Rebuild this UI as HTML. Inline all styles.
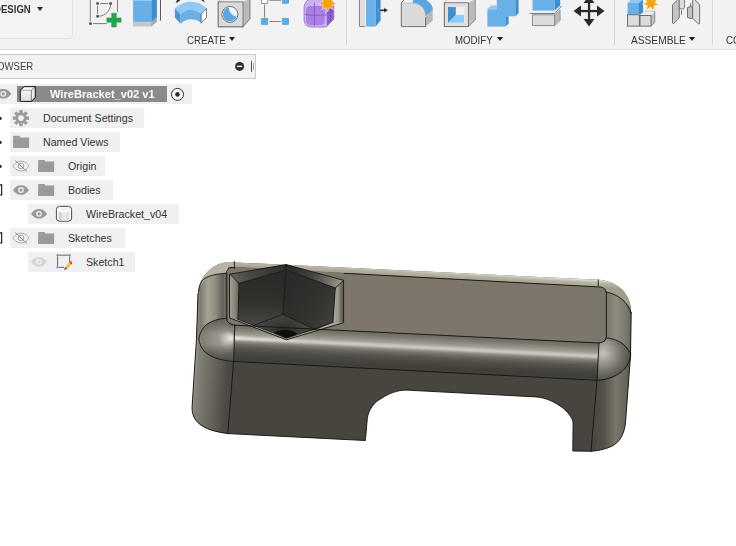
<!DOCTYPE html>
<html><head><meta charset="utf-8">
<style>
html,body{margin:0;padding:0;}
body{width:736px;height:546px;overflow:hidden;background:#fff;position:relative;font-family:"Liberation Sans",sans-serif;font-size:12px;color:#333;}
.abs{position:absolute;}
#tb{left:0;top:0;width:736px;height:50px;background:#f2f2f2;border-bottom:1px solid #dedede;box-sizing:border-box;}
#design{left:-10px;top:-10px;width:83px;height:49px;border:1px solid #e0e0e0;border-radius:4px;background:#f3f3f3;box-sizing:border-box;}
.lbl{top:34px;font-size:10.67px;color:#333;white-space:nowrap;line-height:13px;transform:scaleX(.91);transform-origin:0 0;}
.tr{width:0;height:0;border-left:3px solid transparent;border-right:3px solid transparent;border-top:4px solid #222;}
.sep{top:0;width:1px;height:45px;background:#d6d6d6;}
.tri{display:inline-block;width:0;height:0;border-left:3px solid transparent;border-right:3px solid transparent;border-top:4px solid #222;vertical-align:middle;margin-left:3px;margin-top:-2px;}
#bh{left:-1px;top:54px;width:257px;height:25px;background:#f2f2f2;border:1px solid #c9c9c9;box-sizing:border-box;}
.row{height:20px;background:#f0f0f0;}
.rt{font-size:10.67px;line-height:14px;white-space:nowrap;color:#333;}
</style></head><body>
<div id="tb" class="abs"></div>
<div id="design" class="abs"></div>
<div class="abs lbl" style="left:-6px;top:3px;font-weight:bold;transform:scaleX(.9)">DESIGN</div><div class="abs tr" style="left:37px;top:7px"></div>
<div class="abs sep" style="left:346px"></div>
<div class="abs sep" style="left:614px"></div>
<div class="abs sep" style="left:712px"></div>
<div class="abs lbl" style="left:187px">CREATE</div><div class="abs tr" style="left:229px;top:37px"></div>
<div class="abs lbl" style="left:455px">MODIFY</div><div class="abs tr" style="left:497px;top:37px"></div>
<div class="abs lbl" style="left:631px;transform:scaleX(.955)">ASSEMBLE</div><div class="abs tr" style="left:689px;top:37px"></div>
<div class="abs lbl" style="left:726px">CO</div>

<svg class="abs" id="icons" style="left:0;top:0" width="736" height="49" viewBox="0 0 736 49">
<!-- 1 create sketch -->
<g stroke="#4a4a4a" stroke-width="0.7" fill="none">
<path d="M90.3,0 V21.3 M93,23.6 H107 M117.5,0 V12"/>
<path d="M100,3.5 H108.3 M97.6,5.8 V14" />
<path d="M110.6,5 C110,11 105,15.6 99.3,16.2"/>
</g>
<g fill="#4a4a4a"><rect x="89.2" y="22.4" width="2.6" height="2.4"/><rect x="96.3" y="2.3" width="2.6" height="2.4"/><rect x="109.3" y="2.3" width="2.6" height="2.4"/><rect x="96.3" y="15.1" width="2.6" height="2.4"/></g>
<path d="M111.7,13.2 h4.6 v4.7 h4.8 v4.3 h-4.8 v4.8 h-4.6 v-4.8 h-4.8 v-4.3 h4.8 z" fill="#22a74c" stroke="#1b9440" stroke-width="0.5"/>
<!-- 2 extrude -->
<path d="M133.1,21.9 H151.3 L156.9,16.9 V21.5 L151.3,26.5 H133.1 Z" fill="#c6c6c6"/>
<path d="M151.3,21.9 L156.9,16.9 V21.5 L151.3,26.5 Z" fill="#a8a8a8"/>
<rect x="133.1" y="0" width="18.2" height="21.9" fill="#68afe6"/>
<path d="M151.3,0 H156.9 V16.9 L151.3,21.9 Z" fill="#3f8dce"/>
<path d="M133.1,0 H151.3 L152.3,0 L151.3,0.9 H133.1 Z" fill="#8fcaf8"/>
<rect x="160" y="0" width="0.8" height="20.6" fill="#333"/>
<!-- 3 revolve -->
<path d="M174.9,8.5 C181,3.5 186,1.8 191,1.8 C197,1.8 202,4 206.2,8 L201.2,14 C198,11 194.5,9.8 191,9.8 C187,9.8 183.5,11.5 180.6,14.5 Z" fill="#8fcaf8"/>
<path d="M174.9,8.5 L180.6,14.5 L180.6,23.8 L174.9,17.5 Z" fill="#4a93d4"/>
<path d="M180.6,14.5 C183.5,11.5 187,9.8 191,9.8 C194.5,9.8 198,11 201.2,14 L201.2,23 C198,20.3 194.5,19.3 191,19.3 C187,19.3 183.5,20.8 180.6,23.8 Z" fill="#69b0e6"/>
<path d="M201.2,14 L206.5,8.5 V17.5 L201.2,23.2 Z" fill="#fff" stroke="#444" stroke-width="0.7"/>
<path d="M175.6,2.9 L178,-1.5 L180.2,0.2 L177.6,2.2 Z M204.8,2.5 L200.4,-0.6 L202,-2 L203.6,0 Z" fill="#222"/>
<!-- 4 hole -->
<path d="M218.2,1.9 L222,-1 H250 V18.7 L243,26.8 H218.2 Z" fill="#b9b9b9" stroke="#5a5a5a" stroke-width="0.7"/>
<path d="M218.2,1.9 L222,-1 H250 L243,1.9 Z" fill="#ececec"/>
<rect x="218.2" y="1.9" width="24.8" height="24.9" fill="#dadada" stroke="#5a5a5a" stroke-width="0.7"/>
<circle cx="229.9" cy="14.4" r="8" fill="#f4f4f4" stroke="#555" stroke-width="0.8"/>
<path d="M228.8,7.6 C229,12.5 232,16 236.8,16.6 C235.8,19.8 233,21.3 229.9,21.3 C226,21.3 223,18.3 223,14.4 C223,10.8 225.5,8 228.8,7.6 Z" fill="#5aa6e2"/>
<!-- 5 dashed box -->
<g stroke="#555" stroke-width="0.7" fill="none"><path d="M264.5,4.5 V17.5 M269.4,21.5 H281 M269.4,0.3 H281"/></g>
<rect x="261.4" y="-3" width="6.4" height="6.4" fill="#fff" stroke="#555" stroke-width="0.6"/>
<rect x="282.3" y="-3" width="6.4" height="6.4" fill="#5aaee8" stroke="#3d92d4" stroke-width="0.5"/>
<rect x="261.4" y="18.2" width="6.4" height="6.4" fill="#5aaee8" stroke="#3d92d4" stroke-width="0.5"/>
<rect x="282.3" y="18.2" width="6.4" height="6.4" fill="#5aaee8" stroke="#3d92d4" stroke-width="0.5"/>
<!-- 6 purple form -->
<path d="M304.1,8 Q304.1,1 311,-1.5 H328 Q334,-0.5 333.8,6 V19 L327,26.3 Q326,27 324,27 H311 Q304.1,26 304.1,20 Z" fill="#cbb2f5" stroke="#8e6cc8" stroke-width="0.8"/>
<path d="M326.6,10 L333.5,6 V19 L327,26 Q326.6,20 326.6,10 Z" fill="#8a60cf"/>
<rect x="306" y="6" width="18.8" height="18.9" rx="4.2" fill="#aa7fe6"/>
<path d="M314.4,2.5 V26 M304.8,14.6 Q315,16 326.5,15" stroke="#7d55b8" stroke-width="0.8" fill="none"/>
<path d="M330.4,9 V22 M327,13.6 L333.6,11.4" stroke="#7650b0" stroke-width="0.7" fill="none"/>
<path d="M327.6,-6 L329.3,-0.4 L334,-3 L331.6,1.7 L336.2,3.6 L331.5,5.3 L333.6,9.6 L329.2,7.5 L327.6,12 L326,7.5 L321.6,9.6 L323.7,5.3 L319,3.6 L323.6,1.7 L321.2,-3 L325.9,-0.4 Z" fill="#f7a100" stroke="#f3ecdf" stroke-width="0.5"/>
<!-- 7 press pull -->
<path d="M359.6,0 V26.4 H365" fill="none" stroke="#555" stroke-width="0.8"/>
<rect x="360" y="0" width="5" height="26" fill="#dedede"/>
<rect x="366" y="0" width="9.6" height="26.6" fill="#6ab2e8"/>
<path d="M375.6,0 H380.6 V20.6 L375.6,26.6 Z" fill="#3f8fd0"/>
<path d="M378.5,9.2 H384 V7.6 L388.3,10.2 L384,12.8 V11.2 H378.5 Z" fill="#222" stroke="#f3f3f3" stroke-width="0.5"/>
<!-- 8 fillet -->
<path d="M412.5,3.1 L413.5,-1 H424 C429,1.2 432.2,4.5 432.7,8 V10.5 L425.6,16.8 C425.5,8.5 420,3.2 412.5,3.1 Z" fill="#5aa6e2"/>
<path d="M426,15.5 L432.7,9.5 V20.4 L425.6,26.6 Z" fill="#b7b7b7"/>
<path d="M401.3,26.6 V3.1 H412.5 C420,3.2 425.5,8.5 425.6,16.2 V26.6 Z" fill="#dadada"/><path d="M404.2,-0.5 L401.3,3.1 V26.6 H425.6 V17" fill="none" stroke="#555" stroke-width="0.8"/><path d="M401.3,3.1 H412.5 C420,3.2 425.5,8.5 425.6,16.2" fill="none" stroke="#9a9a9a" stroke-width="0.5"/>
<!-- 9 shell -->
<path d="M444.3,2.8 L448,-1 H475.3 V20 L468.4,26.6 H444.3 Z" fill="#bbbbbb" stroke="#666" stroke-width="0.6"/>
<path d="M444.3,2.8 L448,-1 H475.3 L468.4,2.8 Z" fill="#efefef"/>
<rect x="444.3" y="2.8" width="24.1" height="23.8" fill="#dedede" stroke="#555" stroke-width="0.7"/>
<rect x="448" y="6.9" width="16.5" height="16.2" fill="#f2f2f2"/>
<path d="M448,6.9 H455.8 V15 L448.6,22.5 H448 Z" fill="#3f8fd0"/>
<path d="M455.8,15 H464 V22.8 H448.6 Z" fill="#8ccaf8"/>
<!-- 10 combine -->
<rect x="496.8" y="-2" width="18.8" height="18.3" fill="#69b0e7"/>
<path d="M515.5,-2 H518.6 V13 L515.5,16.3 Z" fill="#3f8fd0"/>
<path d="M487.4,9.3 L491,5.6 H497 V9.3 Z" fill="#8ccaf8"/>
<rect x="487.4" y="9.3" width="18.1" height="17.3" fill="#69b0e7"/>
<path d="M505.5,16.3 H508.6 V23.5 L505.5,26.6 Z" fill="#3f8fd0"/>
<!-- 11 offset -->
<rect x="532.5" y="0" width="22.1" height="10.6" fill="#69b0e7"/>
<path d="M554.6,0 H560.2 V5.6 L554.6,10.6 Z" fill="#3f8fd0"/>
<path d="M532.5,25.6 V14.8 H554.6 V25.6 Z" fill="#dcdcdc" stroke="#666" stroke-width="0.7"/>
<path d="M554.6,14.8 L560.2,10 V20.5 L554.6,25.6 Z" fill="#b9b9b9" stroke="#777" stroke-width="0.5"/>
<path d="M530,13.5 H554.8 L561.6,6" fill="none" stroke="#2f8fe0" stroke-width="1"/>
<!-- 12 move -->
<g fill="#2a2a2a"><rect x="587.9" y="0" width="2.3" height="20"/><rect x="580" y="9.9" width="18" height="2.3"/>
<path d="M573.5,11 L581,5.5 V16.5 Z M604.6,11 L597,5.5 V16.5 Z M589,26.6 L583.6,19 H594.4 Z M589,-4.5 L583.6,3 H594.4 Z"/></g>
<!-- 13 new component -->
<path d="M627.6,3 L631,0 H643 V13 L638.8,14.5 Z" fill="#3f8fd0"/>
<path d="M627.6,3 L631,0 H643 L638.8,3 Z" fill="#8ccaf8"/>
<rect x="627.6" y="3" width="11.2" height="11.5" fill="#69b0e7"/>
<path d="M640,15.5 L644,11.3 H654.8 V22.5 L651,26 Z" fill="#c2c2c2" stroke="#666" stroke-width="0.6"/>
<path d="M640,15.5 L644,11.3 H654.8 L651,15.5 Z" fill="#eeeeee"/>
<rect x="627.5" y="14.8" width="11.8" height="11.3" fill="#dcdcdc" stroke="#555" stroke-width="0.8"/>
<rect x="640" y="15.5" width="11" height="10.6" fill="#dcdcdc" stroke="#555" stroke-width="0.8"/>
<path d="M650.6,-4.5 L652.5,0.3 L657.8,-1.8 L654.8,2.6 L659,5 L654,5.6 L653.6,11.2 L650.6,6.8 L646.6,10 L647.4,5.3 L642.3,4.2 L647,2.2 L644.8,-2.2 L649,0.2 Z" fill="#f7a100" stroke="#f3f3f3" stroke-width="0.5"/>
<!-- 14 joint -->
<path d="M672.5,4.8 L678,-0.5 H679.3 V18 L673.6,23.6 Q672.5,23.8 672.5,22.6 Z" fill="#c4c4c4" stroke="#646464" stroke-width="0.9" stroke-linejoin="round"/>
<path d="M679.3,-1 H684.5 V7.4 Q684.3,8.8 682.6,8.9 H679.3 Z" fill="#dddddd" stroke="#646464" stroke-width="0.8"/>
<path d="M681.5,10.3 V14.7 M690.6,3.1 V8.4" stroke="#1e88e5" stroke-width="1"/>
<path d="M687.5,7.6 Q690,5.8 692.7,7.2 V18.2 Q690,19 687.5,17.4 Z" fill="#c2c2c2" stroke="#646464" stroke-width="0.9"/>
<path d="M692.7,-1 H694.2 L699.6,5 V23.2 Q699.5,24.6 698.4,23.8 L692.7,18.3 Z" fill="#dedede" stroke="#646464" stroke-width="0.9" stroke-linejoin="round"/>
</svg>
<div id="bh" class="abs"></div>
<div class="abs rt" style="left:-3px;top:59px;color:#444;transform:scaleX(.9);transform-origin:0 0">OWSER</div>

<!-- rows -->
<div class="abs row" style="left:0;top:84px;width:192px"></div>
<div class="abs" style="left:17px;top:86px;width:150px;height:16px;background:#8a8a8a"></div>
<div class="abs rt" style="left:50px;top:87px;color:#fff;font-weight:bold;transform:scaleX(1.04);transform-origin:0 0">WireBracket_v02 v1</div>

<div class="abs row" style="left:10px;top:108px;width:134px"></div>
<div class="abs rt" style="left:43px;top:111px">Document Settings</div>
<div class="abs row" style="left:10px;top:132px;width:110px"></div>
<div class="abs rt" style="left:43px;top:135px">Named Views</div>
<div class="abs row" style="left:10px;top:156px;width:95px"></div>
<div class="abs rt" style="left:68px;top:159px">Origin</div>
<div class="abs row" style="left:10px;top:180px;width:103px"></div>
<div class="abs rt" style="left:68px;top:183px">Bodies</div>
<div class="abs row" style="left:28px;top:204px;width:151px"></div>
<div class="abs rt" style="left:86px;top:207px">WireBracket_v04</div>
<div class="abs row" style="left:10px;top:228px;width:115px"></div>
<div class="abs rt" style="left:68px;top:231px">Sketches</div>
<div class="abs row" style="left:28px;top:252px;width:107px"></div>
<div class="abs rt" style="left:86px;top:255px">Sketch1</div>

<svg class="abs" id="tree" style="left:0;top:50px" width="260" height="230" viewBox="0 50 260 230">
<defs>
<g id="eye"><path d="M-8,0 C-5,-4.2 -2.5,-4.8 0,-4.8 C2.5,-4.8 5,-4.2 8,0 C5,4.2 2.5,4.8 0,4.8 C-2.5,4.8 -5,4.2 -8,0 Z"/><circle r="2.9" fill="#f0f0f0"/><circle r="1.6"/></g>
<g id="eyeoff" fill="none" stroke="#999" stroke-width="0.8"><path d="M-8,0 C-5,-4.2 -2.5,-4.8 0,-4.8 C2.5,-4.8 5,-4.2 8,0 C5,4.2 2.5,4.8 0,4.8 C-2.5,4.8 -5,4.2 -8,0 Z"/><circle r="2.8"/><path d="M-6,-5.6 L6,5.6" stroke="#777"/></g>
<g id="folder"><path d="M0,0 H6.4 L7.4,1.7 H16 V12.2 H0 Z" fill="#9a9a9a"/><path d="M0,2.3 H6.6" stroke="#b8b8b8" stroke-width="0.5"/></g>
<linearGradient id="gCube" x1="0" y1="0" x2="0" y2="1"><stop offset="0" stop-color="#f4f5f8"/><stop offset="1" stop-color="#d9dbe2"/></linearGradient>
<linearGradient id="gCyl" x1="0" y1="0" x2="1" y2="0"><stop offset="0" stop-color="#c4c6cc"/><stop offset="0.5" stop-color="#eceef2"/><stop offset="1" stop-color="#d8dae0"/></linearGradient>
</defs>
<!-- header icons -->
<circle cx="239.6" cy="66.4" r="4.5" fill="#2b2b2b"/><rect x="237" y="65.7" width="5.2" height="1.4" fill="#fff"/>
<rect x="251" y="61" width="1" height="10.8" fill="#555"/><rect x="253" y="63" width="0.9" height="6.8" fill="#999"/>
<!-- row1 -->
<use href="#eye" x="3.3" y="93.8" fill="#9a9a9a"/>
<path d="M20.3,90.3 L24,86.6 H35.3 V97.5 L31.3,101.4 H21.3 Q20.3,101.4 20.3,100.4 Z" fill="#fafafa" stroke="#2a2a2a" stroke-width="0.8" stroke-linejoin="round"/>
<path d="M20.7,90.3 H31.3 V101 H21.3 Q20.7,101 20.7,100.4 Z" fill="url(#gCube)"/>
<path d="M31.3,90.3 L35.3,86.6 V97.5 L31.3,101.4 Z" fill="#eceef2" stroke="#2a2a2a" stroke-width="0.6"/>
<path d="M20.3,90.3 H31.3" stroke="#555" stroke-width="0.5"/>
<path d="M20.3,90.3 L24,86.6 H35.3 V97.5 L31.3,101.4 H21.3 Q20.3,101.4 20.3,100.4 Z" fill="none" stroke="#222" stroke-width="0.9" stroke-linejoin="round"/>
<circle cx="177.5" cy="94.4" r="6" fill="#fff" stroke="#2a2a2a" stroke-width="1"/><circle cx="177.5" cy="94.4" r="2.3" fill="#2a2a2a"/>
<!-- row2 gear -->
<g transform="translate(21,118.1)" fill="#9c9c9c">
<circle r="5.6"/>
<g id="teeth"><rect x="-1.7" y="-8.1" width="3.4" height="16.2"/><rect x="-1.7" y="-8.1" width="3.4" height="16.2" transform="rotate(45)"/><rect x="-1.7" y="-8.1" width="3.4" height="16.2" transform="rotate(90)"/><rect x="-1.7" y="-8.1" width="3.4" height="16.2" transform="rotate(135)"/></g>
<circle r="2.8" fill="#f0f0f0"/>
</g>
<circle cx="0" cy="118.3" r="1.6" fill="#111"/>
<!-- row3 -->
<use href="#folder" x="13.1" y="135.8"/>
<circle cx="0" cy="142.3" r="1.6" fill="#111"/>
<!-- row4 -->
<use href="#eyeoff" x="21" y="166"/>
<use href="#folder" x="38.1" y="159.9"/>
<circle cx="0" cy="166.3" r="1.6" fill="#111"/>
<!-- row5 -->
<path d="M-1,184.9 H1.7 V195 H-1" fill="#fff" stroke="#111" stroke-width="1.1"/>
<use href="#eye" x="21" y="190" fill="#9a9a9a"/>
<use href="#folder" x="38.1" y="183.9"/>
<!-- row6 -->
<use href="#eye" x="39" y="213.8" fill="#9a9a9a"/>
<rect x="56.4" y="206.4" width="15.2" height="14.8" rx="3.2" fill="#fbfbfc" stroke="#343a48" stroke-width="0.9"/>
<path d="M58.8,211 V220.4 H69.2 V211 Z" fill="url(#gCyl)"/>
<ellipse cx="64" cy="211" rx="5.2" ry="1.8" fill="#fdfdfd" stroke="#d0d2d8" stroke-width="0.4"/>
<!-- row7 -->
<path d="M-1,232.9 H1.7 V243 H-1" fill="#fff" stroke="#111" stroke-width="1.1"/>
<use href="#eyeoff" x="21" y="238"/>
<use href="#folder" x="38.1" y="231.9"/>
<!-- row8 -->
<use href="#eye" x="39" y="261.8" fill="#d6d6d6"/>
<path d="M57.6,256.5 V266 M58.6,255.2 H68.6 M69.6,256.5 V262 M58.6,267.3 H64" stroke="#444" stroke-width="0.8" fill="none"/>
<rect x="56.6" y="254.3" width="1.9" height="1.9" fill="#2a8fe8"/><rect x="68.7" y="254.3" width="1.9" height="1.9" fill="#2a8fe8"/><rect x="56.6" y="266.4" width="1.9" height="1.9" fill="#2a8fe8"/>
<path d="M65.2,267 L69.2,262.6 L71.3,264.6 L67.2,269 Z" fill="#f5b840"/>
<path d="M69.2,262.6 L70.3,261.5 Q71.2,261 71.9,261.9 Q72.6,262.8 72,263.6 L71.3,264.6 Z" fill="#e83434"/>
<path d="M65.2,267 L67.2,269 L64,270 Z" fill="#555"/>
</svg>
<svg class="abs" id="model" style="left:0;top:0" width="736" height="546" viewBox="0 0 736 546">
<defs>
<linearGradient id="gFil" gradientUnits="userSpaceOnUse" x1="400" y1="332.9" x2="398.1" y2="370.2">
<stop offset="0" stop-color="#6b685f"/><stop offset="0.1" stop-color="#79766c"/><stop offset="0.24" stop-color="#9a978e"/><stop offset="0.33" stop-color="#b7b5ad"/><stop offset="0.38" stop-color="#b7b5ad"/><stop offset="0.45" stop-color="#8e8b83"/><stop offset="0.52" stop-color="#716e66"/><stop offset="0.62" stop-color="#59564f"/><stop offset="0.75" stop-color="#4a4842"/><stop offset="0.9" stop-color="#403e39"/><stop offset="1" stop-color="#43413b"/>
</linearGradient>
<linearGradient id="gStreak" gradientUnits="userSpaceOnUse" x1="212" y1="0" x2="600" y2="0">
<stop offset="0" stop-color="#fff" stop-opacity="0"/><stop offset="0.035" stop-color="#fff" stop-opacity="0.7"/><stop offset="0.055" stop-color="#fff" stop-opacity="1"/><stop offset="0.09" stop-color="#fff" stop-opacity="0.75"/><stop offset="0.25" stop-color="#fff" stop-opacity="0.42"/><stop offset="0.6" stop-color="#fff" stop-opacity="0.36"/><stop offset="1" stop-color="#fff" stop-opacity="0.36"/>
</linearGradient>
<filter id="fBlur" x="-5%" y="-300%" width="110%" height="700%"><feGaussianBlur stdDeviation="1.3"/></filter>
<filter id="fBlur2" x="-20%" y="-20%" width="140%" height="140%"><feGaussianBlur stdDeviation="0.6"/></filter>
<linearGradient id="gLeft" gradientUnits="userSpaceOnUse" x1="193.6" y1="375" x2="234.6" y2="378.2">
<stop offset="0" stop-color="#a09d90"/><stop offset="0.08" stop-color="#85827a"/><stop offset="0.22" stop-color="#7a776d"/><stop offset="0.5" stop-color="#67645c"/><stop offset="0.82" stop-color="#4d4a44"/><stop offset="1" stop-color="#48453f"/>
</linearGradient>
<linearGradient id="gLeftTop" gradientUnits="userSpaceOnUse" x1="197" y1="0" x2="228" y2="0">
<stop offset="0" stop-color="#8a877b"/><stop offset="0.12" stop-color="#7f7c71"/><stop offset="0.35" stop-color="#a7a495"/><stop offset="0.6" stop-color="#8f8c7f"/><stop offset="0.84" stop-color="#625f57"/><stop offset="1" stop-color="#908d81"/>
</linearGradient>
<linearGradient id="gRight" gradientUnits="userSpaceOnUse" x1="592" y1="0" x2="631" y2="0">
<stop offset="0" stop-color="#48453f"/><stop offset="0.3" stop-color="#545149"/><stop offset="0.6" stop-color="#78756b"/><stop offset="0.85" stop-color="#69665d"/><stop offset="1" stop-color="#58554d"/>
</linearGradient>
<linearGradient id="gRightTop" gradientUnits="userSpaceOnUse" x1="606" y1="0" x2="631" y2="0">
<stop offset="0" stop-color="#77736a"/><stop offset="0.4" stop-color="#8f8b7e"/><stop offset="0.8" stop-color="#7b786d"/><stop offset="1" stop-color="#69665d"/>
</linearGradient>
<radialGradient id="gBallL" gradientUnits="userSpaceOnUse" cx="217" cy="340" r="24" fx="232" fy="338">
<stop offset="0" stop-color="#f2f1ec"/><stop offset="0.12" stop-color="#cfcdc6"/><stop offset="0.35" stop-color="#9b988f"/><stop offset="0.75" stop-color="#827f76"/><stop offset="1" stop-color="#8f8c82"/>
</radialGradient>
<linearGradient id="gBallLd" gradientUnits="userSpaceOnUse" x1="0" y1="322" x2="0" y2="362">
<stop offset="0" stop-color="#5d5a53" stop-opacity="0.65"/><stop offset="0.3" stop-color="#5d5a53" stop-opacity="0"/><stop offset="0.55" stop-color="#46443e" stop-opacity="0"/><stop offset="1" stop-color="#46443e" stop-opacity="0.95"/>
</linearGradient>
<radialGradient id="gBallR" gradientUnits="userSpaceOnUse" cx="603" cy="353" r="30">
<stop offset="0" stop-color="#c4c2bb"/><stop offset="0.3" stop-color="#9f9c93"/><stop offset="0.65" stop-color="#716e66"/><stop offset="1" stop-color="#4a4741"/>
</radialGradient>
<linearGradient id="gWallL" gradientUnits="userSpaceOnUse" x1="262" y1="272" x2="258" y2="325">
<stop offset="0" stop-color="#2a2927"/><stop offset="0.55" stop-color="#31302d"/><stop offset="1" stop-color="#484640"/>
</linearGradient>
<linearGradient id="gWallR" gradientUnits="userSpaceOnUse" x1="290" y1="285" x2="335" y2="315">
<stop offset="0" stop-color="#2c2b29"/><stop offset="0.6" stop-color="#33322f"/><stop offset="1" stop-color="#403e3a"/>
</linearGradient>
<linearGradient id="gChR" gradientUnits="userSpaceOnUse" x1="290" y1="268" x2="340" y2="284">
<stop offset="0" stop-color="#2b2a28"/><stop offset="0.45" stop-color="#45433f"/><stop offset="0.8" stop-color="#77746b"/><stop offset="1" stop-color="#98958a"/>
</linearGradient>
<linearGradient id="gChL" gradientUnits="userSpaceOnUse" x1="232" y1="280" x2="286" y2="266">
<stop offset="0" stop-color="#67645c"/><stop offset="0.3" stop-color="#4b4944"/><stop offset="1" stop-color="#2e2d2a"/>
</linearGradient>
<linearGradient id="gStripR" gradientUnits="userSpaceOnUse" x1="333" y1="0" x2="344" y2="0">
<stop offset="0" stop-color="#aeab9d"/><stop offset="0.45" stop-color="#9a978a"/><stop offset="0.7" stop-color="#716e65"/><stop offset="1" stop-color="#55524c"/>
</linearGradient>
<linearGradient id="gStripL" gradientUnits="userSpaceOnUse" x1="230" y1="0" x2="239" y2="0">
<stop offset="0" stop-color="#a3a092"/><stop offset="0.5" stop-color="#8a877b"/><stop offset="1" stop-color="#66635b"/>
</linearGradient>
<linearGradient id="gTopBand" gradientUnits="userSpaceOnUse" x1="400" y1="269.3" x2="399.6" y2="276.4">
<stop offset="0" stop-color="#dddbd1"/><stop offset="0.35" stop-color="#bab6a6"/><stop offset="1" stop-color="#a29e8b"/>
</linearGradient>
<radialGradient id="gFloor" gradientUnits="userSpaceOnUse" cx="284" cy="336" r="26">
<stop offset="0" stop-color="#1c1c1a"/><stop offset="0.5" stop-color="#3a3834"/><stop offset="1" stop-color="#4a4842"/>
</radialGradient>
<clipPath id="cpFloor"><path d="M282.6,314.4 L316,329.8 L297,334.6 L286.3,338.3 L273,332.6 L253.5,325.5 Z"/></clipPath>
<clipPath id="cpFil"><path d="M234.8,325.2 L599,343 L597,380.3 L233.6,361.4 Z"/></clipPath>
<clipPath id="cpBallL"><path d="M198.8,339.2 C199.5,333 203,327 208,323.5 C213,320.5 219,318.8 225.3,318.4 L226.5,318.6 Q227.5,323 232,324.6 L234.8,325.2 L233.6,361.5 C221,360.5 211,357.5 205,352 C201.5,348.5 199.5,344 198.8,339.2 Z"/></clipPath>
</defs>
<!-- silhouette / front face -->
<path id="sil" d="M196.4,340 L198,293 C198.8,281 207,266 226,262 L598,279.8 C618,281 631,294 631.2,312 L630.5,356 L625.6,421 C624.6,434 620,442 612,446 C607,448.6 600,450.6 591,451.3 L572.8,451 L573.1,423 C572.8,418.5 569,413.5 563.8,408.7 C556,402.5 546,397.5 536,396.9 L406,390.1 C397,390.2 389,393.5 382,398 C374,402 368.5,410 367.3,418.5 L365.4,440.5 L227.8,433.6 C201,430 192.3,421 192,408 Z" fill="#48453f"/>
<!-- top band -->
<path d="M198,293 C198.8,281 207,266 226,262 L598,279.8 C618,281 631,294 631.2,312 L606.3,292 L600,287 L240,267.4 L227,273 L199.6,289 Z" fill="url(#gTopBand)"/>
<!-- left end -->
<path d="M198,293 C198.8,281 207,266 226,262 L234.4,262.3 L234.5,268 L232,267.5 Q227,268 226.3,273.2 C216,274 209,275.5 204,279 C201,281 199.5,285 198.6,292 Z" fill="#b9b5a4"/>

<path d="M196.4,340 L198,293 C200,283 209,275 227,273 L234.5,272 L234.8,325 L233.6,361.4 L227.8,433.6 C201,430 192.3,421 192,408 Z" fill="url(#gLeft)"/>
<path d="M197.2,318 L198,293 C200,283 209,275 227,273 L227,318.4 C210,320 202,328 198.8,339.2 L196.4,340 Z" fill="url(#gLeftTop)"/>
<!-- right end -->
<path d="M599,343 L606.3,338 L606.3,292 C620,296 630,305 631.2,312 L630.5,356 L625.6,421 C624.6,434 620,442 612,446 C607,448.6 600,450.6 591,451.3 Z" fill="url(#gRight)"/>
<path d="M606.3,338 L606.3,292 C618,293 630,305 631.2,318 L630.8,352 C628,345 618,339 606.3,338 Z" fill="url(#gRightTop)"/>
<!-- top face -->
<path d="M228,266.5 L600,287 Q606,287.5 606.3,293 L606.3,336 Q606,342.5 599,343 L234.8,325.2 L228,322 Z" fill="#7c776a"/>
<!-- fillet -->
<path d="M234.8,325.2 L599,343 L597,380.3 L233.6,361.4 Z" fill="url(#gFil)"/>
<!-- ball corners -->
<g clip-path="url(#cpBallL)"><rect x="195" y="315" width="42" height="50" fill="url(#gBallL)"/><rect x="195" y="315" width="42" height="50" fill="url(#gBallLd)"/></g>
<path d="M599,343 Q606,342.5 606.3,338 C618,339 629,346 630.7,354 C630,368 618,379 597,380.3 Z" fill="url(#gBallR)"/>
<!-- streak highlight -->
<g clip-path="url(#cpFil)"><path d="M228,336.6 L600,355.4 L600,357.6 L228,338.9 Z" fill="url(#gStreak)" filter="url(#fBlur)"/></g>
<!-- hex pocket -->
<path d="M229.9,274.2 L286.2,264.6 L343.6,280.3 L343.6,322.6 L286.4,339.8 L229.9,318 Z" fill="#aaa79a"/>
<path d="M229.9,274.2 L239,283.4 L238,319.5 L229.9,318 Z" fill="url(#gStripL)"/>
<path d="M343.6,280.3 L335.3,288 L332.9,322.4 L343.6,322.6 Z" fill="url(#gStripR)"/>
<path d="M229.9,274.2 L286.2,264.6 L286.2,270.1 L239,283.4 Z" fill="url(#gChL)"/>
<path d="M286.2,264.6 L343.6,280.3 L335.3,288 L286.2,270.1 Z" fill="url(#gChR)"/>
<path d="M239,283.4 L286.2,270.1 L282.6,314.4 L253.5,325.5 L238,319.5 Z" fill="url(#gWallL)"/>
<path d="M286.2,270.1 L335.3,288 L332.9,322.4 L316,329.8 L282.6,314.4 Z" fill="url(#gWallR)"/>
<path d="M282.6,314.4 L316,329.8 L297,334.6 L286.3,338.3 L273,332.6 L253.5,325.5 Z" fill="url(#gFloor)"/>
<ellipse cx="285" cy="336.5" rx="13" ry="6.2" fill="#080808" clip-path="url(#cpFloor)" filter="url(#fBlur2)"/>
<!-- edges -->
<g fill="none" stroke="#141412" stroke-width="0.9" stroke-linecap="round" stroke-linejoin="round">
<path d="M234.8,325.2 L599,343"/>
<path d="M233.6,361.4 L597,380.3"/>
<path d="M234.3,261.5 L234.5,268"/>
<path d="M234.8,325.2 L233.6,361.4 L227.8,433.6"/>
<path d="M598.2,279.8 L598.3,286"/>
<path d="M599,343 L597,380.3 L591,451.3"/>
<path d="M344,273.3 L600,287 Q606,287.5 606.3,293 L606.3,336 Q606,342.5 599,343"/>
<path d="M198.6,292 C199.5,285 201,281 204,279 C209,275.5 216,274 226.2,273.2"/>
<path d="M198.8,339.2 C199.5,333 203,327 208,323.5 C213,320.5 219,318.8 225.3,318.4"/>
<path d="M198.8,339.2 C199.5,344 201.5,348.5 205,352 C211,357.5 221,360.5 233.6,361.5"/>
<path d="M606.3,292 C618,294 629,303 631,313"/>
<path d="M606.3,338 C617,338.6 626,344 630.7,354"/>
<path d="M597,380.3 C618,379 630,368 630.7,354"/>
<path d="M229.9,274.2 L286.2,264.6 L343.6,280.3 L343.6,322.6 L286.4,339.8 L229.9,318 Z"/>
<path d="M239,283.4 L286.2,270.1 L335.3,288 L332.9,322.4"/>
<path d="M239,283.4 L238,319.5"/>
<path d="M229.9,274.2 L239,283.4"/>
<path d="M343.6,280.3 L335.3,288"/>
<path d="M286.2,264.6 L286.2,270.1 L282.6,314.4 L253.5,325.5"/>
<path d="M282.6,314.4 L316,329.8"/>
<path d="M238,319.5 L273,332.8 L286.3,338.3 L297,334.8 L332.9,322.4" stroke-width="0.7"/>
<path d="M234.3,268 L232,267.5 Q226.5,268 226.3,274 L226.3,318 Q226.8,323 232,324.6 L234.8,325.2"/>
</g>
<g fill="none" stroke="#121210" stroke-width="1" opacity="0.9" stroke-linejoin="round">
<path d="M196.4,340 L198,293 M196.4,340 L192,408 C192.3,421 201,430 227.8,433.6 L365.4,440.5 L367.3,418.5 C368.5,410 374,402 382,398 C389,393.5 397,390.2 406,390.1 L536,396.9 C546,397.5 556,402.5 563.8,408.7 C569,413.5 572.8,418.5 573.1,423 L572.8,451 L591,451.3 C600,450.6 607,448.6 612,446 C620,442 624.6,434 625.6,421 L630.5,356 L631.2,312"/>
</g>
</svg>
</body></html>
